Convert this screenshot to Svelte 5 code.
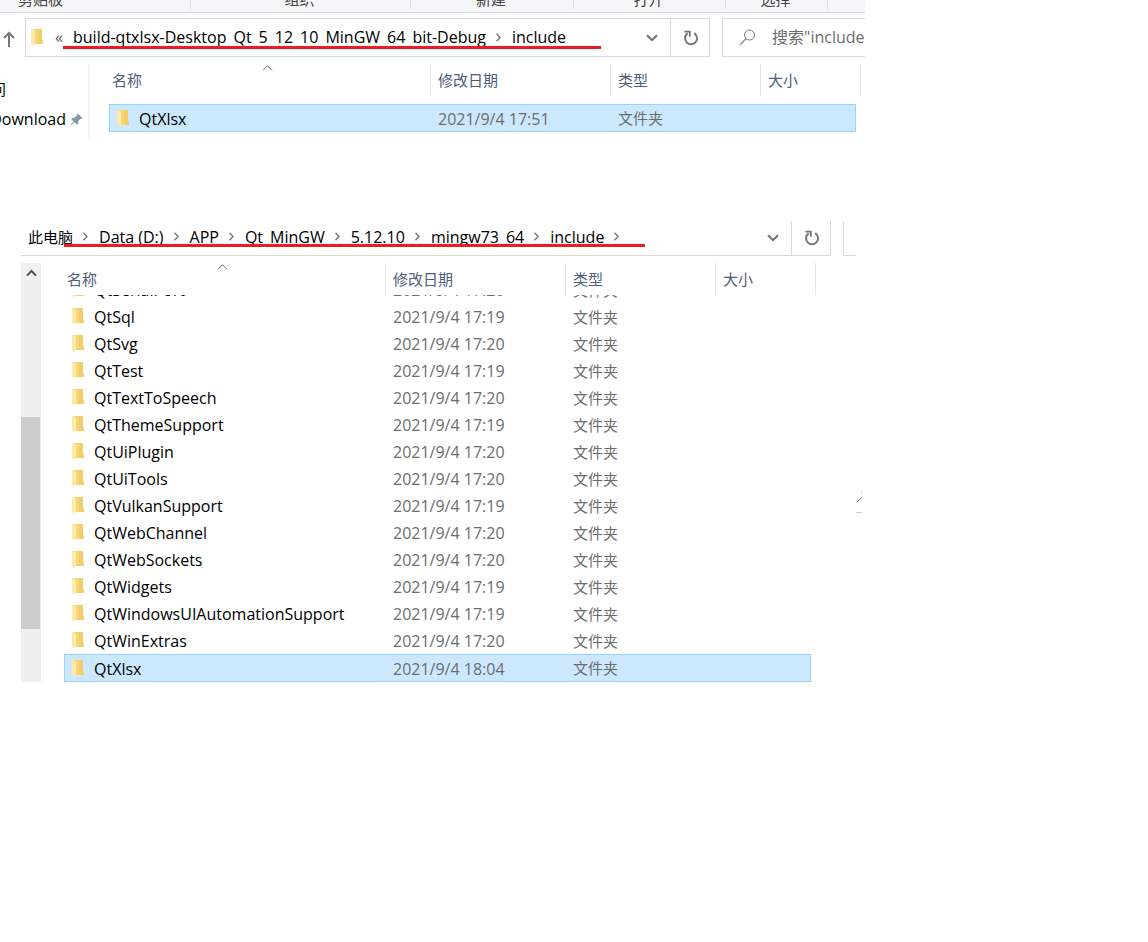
<script>
	const ribbon = ['剪贴板', '组织', '新建', '打开', '选择'];
	const columns = ['名称', '修改日期', '类型', '大小'];

	const buildPath = ['build-qtxlsx-Desktop_Qt_5_12_10_MinGW_64_bit-Debug', 'include'];
	const installPath = ['此电脑', 'Data (D:)', 'APP', 'Qt_MinGW', '5.12.10', 'mingw73_64', 'include'];

	const buildFiles = [{ name: 'QtXlsx', date: '2021/9/4 17:51', selected: true }];
	const installFiles = [
		{ name: 'QtSerialPort', date: '2021/9/4 17:20', cut: true },
		{ name: 'QtSql', date: '2021/9/4 17:19' },
		{ name: 'QtSvg', date: '2021/9/4 17:20' },
		{ name: 'QtTest', date: '2021/9/4 17:19' },
		{ name: 'QtTextToSpeech', date: '2021/9/4 17:20' },
		{ name: 'QtThemeSupport', date: '2021/9/4 17:19' },
		{ name: 'QtUiPlugin', date: '2021/9/4 17:20' },
		{ name: 'QtUiTools', date: '2021/9/4 17:20' },
		{ name: 'QtVulkanSupport', date: '2021/9/4 17:19' },
		{ name: 'QtWebChannel', date: '2021/9/4 17:20' },
		{ name: 'QtWebSockets', date: '2021/9/4 17:20' },
		{ name: 'QtWidgets', date: '2021/9/4 17:19' },
		{ name: 'QtWindowsUIAutomationSupport', date: '2021/9/4 17:19' },
		{ name: 'QtWinExtras', date: '2021/9/4 17:20' },
		{ name: 'QtXlsx', date: '2021/9/4 18:04', selected: true }
	];

	let search = $state('搜索"include"');
</script>

{#snippet folder()}
	<svg class="folder" width="13" height="17" viewBox="0 0 13 17" aria-hidden="true">
		<path d="M2 0h9v11l1 1v3H2z" fill="#f6d67a" />
		<path d="M7 0h4v11l1 1v3H7z" fill="#f2ce68" />
		<path d="M0 0h1l3 2v12.5l-1 0.5v2l-3-2z" fill="#ffe9a6" />
	</svg>
{/snippet}

{#snippet crumb()}
	<svg class="crumb" width="5" height="9" viewBox="0 0 5 9" aria-hidden="true">
		<path d="M0.5 0.8l3.5 3.7l-3.5 3.7" fill="none" stroke="#7a7a7a" stroke-width="1.5" />
	</svg>
{/snippet}

{#snippet tools()}
	<button class="tool" aria-label="以前的位置">
		<svg width="12" height="8" viewBox="0 0 12 8">
			<path d="M1 1.2l5 5l5-5" fill="none" stroke="#6e6e6e" stroke-width="2" />
		</svg>
	</button>
	<button class="tool refresh" aria-label="刷新">
		<svg width="16" height="16" viewBox="0 0 16 16">
			<path d="M11.2 3.2a6 6 0 1 1-6.6.2" fill="none" stroke="#767676" stroke-width="2" />
			<path d="M1.5 1.6h5.3v5.2" fill="none" stroke="#767676" stroke-width="1.8" />
		</svg>
	</button>
{/snippet}

{#snippet path(parts)}
	{#each parts as part, i}
		{#if i > 0}{@render crumb()}{/if}
		<a class:cjk={part === '此电脑'} href="#{part}">
			{#each part.split('_') as word, n}{#if n > 0}<span class="joint">_</span>{/if}{word}{/each}
		</a>
	{/each}
{/snippet}

{#snippet list(files)}
	<table>
		<colgroup>
			<col />
			<col class="w-date" />
			<col class="w-type" />
			<col class="w-size" />
		</colgroup>
		<thead>
			<tr>
				{#each columns as title, i}
					<th>
						{title}
						{#if i === 0}
							<svg class="sort" width="11" height="6" viewBox="0 0 11 6" aria-hidden="true">
								<path d="M1 5.3l4.5-4.5l4.5 4.5" fill="none" stroke="#666" />
							</svg>
						{/if}
					</th>
				{/each}
			</tr>
		</thead>
		<tbody>
			{#each files as file}
				<tr class:selected={file.selected} class:cut={file.cut}>
					<td><div class="cell name">{@render folder()}<span>{file.name}</span></div></td>
					<td><div class="cell"><span>{file.date}</span></div></td>
					<td><div class="cell cjk">文件夹</div></td>
					<td></td>
				</tr>
			{/each}
		</tbody>
	</table>
{/snippet}

<section class="build">
	<div class="ribbon">
		{#each ribbon as group}
			<span>{group}</span>
		{/each}
	</div>

	<div class="bar">
		<button class="up" aria-label="上移">
			<svg width="12" height="16" viewBox="0 0 12 16">
				<path d="M6 16V2M1 7l5-5l5 5" fill="none" stroke="#767676" stroke-width="2" />
			</svg>
		</button>
		<nav class="address">
			{@render folder()}
			<span class="more">«</span>
			{@render path(buildPath)}
			<i class="marker"></i>
			{@render tools()}
		</nav>
		<label class="search">
			<svg width="17" height="17" viewBox="0 0 17 17" aria-hidden="true">
				<circle cx="10.5" cy="6" r="5" fill="none" stroke="#777" />
				<path d="M7 9.6L1 15.8" stroke="#777" stroke-width="1.2" />
			</svg>
			<input bind:value={search} aria-label="搜索" />
		</label>
	</div>

	<div class="content">
		<aside>
			<div class="quick"><span>快速访问</span></div>
			<div class="pinned">
				<span>Download</span>
				<svg width="13" height="13" viewBox="0 0 13 13" aria-hidden="true">
					<path d="M7.6 0.4l5 4.8l-1.4 0.8l-0.8-0.2l-2.2 2.5l0.1 2.2l-1.2 1.3l-2.6-2.6l-3.6 3.3l-0.5-0.5l3.3-3.6l-2.5-2.5l1.3-1.2l2.2 0.1l2.4-2.2l-0.3-0.9z" fill="#8a969f" />
				</svg>
			</div>
		</aside>
		<div class="files">{@render list(buildFiles)}</div>
	</div>
</section>

<div class="lower">
	<section class="install">
		<div class="bar">
			<nav class="address">
				{@render path(installPath)}
				{@render crumb()}
				<i class="marker"></i>
				{@render tools()}
			</nav>
			<div class="search"></div>
		</div>

		<div class="content">
			<div class="scrollbar">
				<button aria-label="向上滚动">
					<svg width="11" height="8" viewBox="0 0 11 8">
						<path d="M1 6.6l4.5-4.6l4.5 4.6" fill="none" stroke="#505050" stroke-width="2" />
					</svg>
				</button>
				<div class="before"></div>
				<div class="thumb"></div>
				<div class="after"></div>
			</div>
			<div class="files">{@render list(installFiles)}</div>
		</div>
	</section>
	<svg class="scrap" width="6" height="24" viewBox="0 0 6 24" aria-hidden="true">
		<path d="M1 12l4.5-4.5" stroke="#777" />
		<path d="M5.5 1v4" stroke="#f5dfb8" />
		<path d="M0 22.5h6" stroke="#ccc" />
	</svg>
</div>

<style>
	:global(body) {
		background: #fff;
	}
	section,
	input {
		font-family: 'Open Sans', 'Noto Sans CJK SC', sans-serif;
		font-size: 16px;
		line-height: 20px;
		color: #000;
	}
	button {
		display: flex;
		align-items: center;
		justify-content: center;
		padding: 0;
		border: 0;
		background: none;
	}
	svg {
		display: block;
		flex: none;
	}
	a {
		color: #000;
		text-decoration: none;
		white-space: nowrap;
	}
	.cjk,
	th,
	.ribbon,
	.quick {
		font-family: 'Noto Sans CJK SC', sans-serif;
		font-size: 15px;
		font-weight: 400;
	}

	.build {
		max-width: 865px;
		overflow: hidden;
	}
	.ribbon {
		display: grid;
		grid-template-columns: 191px 220px 163px 152px 102px 1fr;
		height: 12px;
		overflow: hidden;
		background: #f5f6f7;
		border-bottom: 1px solid #dadbdc;
		color: #444;
	}
	.ribbon span {
		display: flex;
		align-items: flex-end;
		justify-content: center;
		height: 9px;
		box-sizing: border-box;
		padding-right: 2px;
		border-right: 1px solid #dfe0e1;
	}
	.ribbon span:first-child {
		justify-content: flex-start;
		padding-left: 18px;
	}

	.bar {
		display: flex;
	}
	.build .bar {
		padding-top: 5px;
	}
	.up {
		width: 25px;
		padding: 2px 7px 0 0;
	}
	.address {
		position: relative;
		display: flex;
		flex: 1;
		align-items: center;
		height: 37px;
		padding-left: 5px;
		border: 1px solid #d9d9d9;
	}
	.address a,
	.more {
		padding-bottom: 2px;
	}
	/* the underline runs over the underscores */
	.joint {
		color: transparent;
	}
	.crumb {
		margin: 0 11px 0 10px;
	}
	.more {
		width: 18px;
		margin-left: 11px;
		color: #555;
	}
	.marker {
		position: absolute;
		top: 27px;
		left: 37px;
		width: 538px;
		height: 3px;
		background: #ed1c24;
	}
	.tool {
		width: 36px;
		align-self: stretch;
		margin-left: auto;
	}
	.refresh {
		margin-left: 0;
		border-left: 1px solid #d9d9d9;
		width: 39px;
		padding-left: 2px;
	}
	.search {
		display: flex;
		align-items: center;
		width: 142px;
		margin-left: 12px;
		border: 1px solid #d9d9d9;
		border-right: 0;
		overflow: hidden;
		box-sizing: border-box;
	}
	.build .search {
		width: 143px;
		padding-left: 16px;
	}
	.search input {
		width: 110px;
		flex: none;
		margin-left: 16px;
		padding: 0 0 2px;
		border: 0;
		outline: 0;
		color: #6d6d6d;
	}

	.content {
		display: flex;
	}
	.build .content {
		padding-top: 7px;
	}
	aside {
		width: 88px;
		height: 76px;
		flex: none;
		border-right: 1px solid #f0f0f0;
		overflow: hidden;
	}
	.quick,
	.pinned {
		display: flex;
		align-items: center;
		justify-content: flex-end;
		gap: 4px;
		height: 30px;
		padding-right: 5px;
		white-space: nowrap;
	}
	.quick {
		padding: 10px 82px 0 0;
	}
	.files {
		flex: 1;
		min-width: 0;
		padding-left: 20px;
	}
	table {
		width: 100%;
		max-width: 747px;
		table-layout: fixed;
		border-spacing: 0;
	}
	.w-date {
		width: 180px;
	}
	.w-type {
		width: 150px;
	}
	.w-size {
		width: 95px;
	}
	th {
		position: relative;
		height: 32px;
		padding: 0 0 0 7px;
		text-align: left;
		color: #4c607a;
		white-space: nowrap;
	}
	th:first-child {
		padding-left: 3px;
	}
	th::after {
		content: '';
		position: absolute;
		top: 0;
		right: 0;
		bottom: 0;
		border-right: 1px solid #e5e5e5;
	}
	th:last-child::after {
		right: -5px;
	}
	.sort {
		position: absolute;
		top: 1px;
		left: 153px;
	}
	.build tbody::before {
		content: '';
		display: block;
		height: 8px;
	}
	td {
		height: 27px;
		padding: 0 0 0 7px;
		color: #6d6d6d;
	}
	.cell {
		display: flex;
		align-items: center;
		height: 27px;
		white-space: nowrap;
	}
	.cell span {
		padding-top: 1px;
	}
	.name {
		gap: 9px;
		color: #000;
	}
	td:first-child {
		padding-left: 8px;
	}
	.selected {
		background: #cce8ff;
		outline: 1px solid #99d1ff;
		outline-offset: -1px;
	}
	.selected td {
		height: 28px;
	}
	/* row scrolled half way under the header */
	.cut td {
		height: 8px;
		vertical-align: top;
	}
	.cut .cell {
		margin-top: -19px;
		clip-path: inset(19px 0 0);
	}

	.lower {
		display: flex;
		align-items: flex-start;
		margin-top: 81px;
		padding-left: 21px;
	}
	.install {
		flex: 1;
		max-width: 835px;
		min-width: 0;
	}
	.install .address {
		height: 34px;
		padding-left: 7px;
		border-width: 0 1px 1px 0;
	}
	.install .address a {
		padding-bottom: 3px;
	}
	.install .crumb {
		margin-bottom: 3px;
	}
	.install .marker {
		top: 23px;
		left: 43px;
		width: 581px;
	}
	.install .search {
		width: 13px;
		border-top: 0;
	}
	.install .content {
		padding-top: 7px;
	}
	.scrollbar {
		display: flex;
		flex-direction: column;
		width: 20px;
		margin-right: 2px;
		background: #f0f0f0;
	}
	.scrollbar button {
		height: 20px;
	}
	.before {
		flex: 134;
	}
	.thumb {
		flex: 212;
		margin-right: 1px;
		background: #cdcdcd;
	}
	.after {
		flex: 53;
	}
	.install .files {
		border-left: 1px solid #f5f5f5;
	}
	.scrap {
		margin-top: 269px;
	}
</style>
